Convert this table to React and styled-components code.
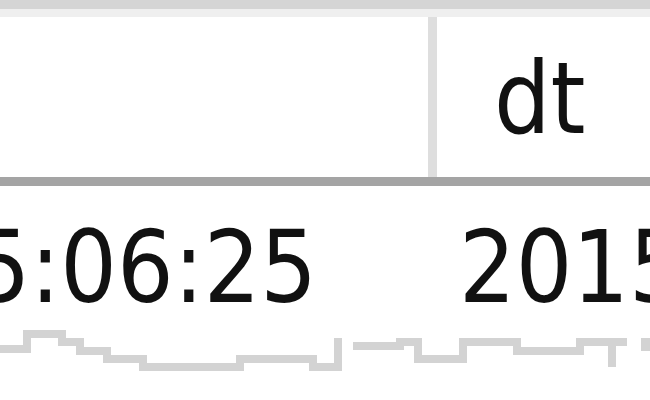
import React from "react";
import styled, { createGlobalStyle } from "styled-components";

const GlobalStyle = createGlobalStyle`
  html, body {
    margin: 0;
    padding: 0;
    background: #ffffff;
    overflow: hidden;
  }
`;

const Grid = styled.div`
  width: 650px;
  height: 400px;
  overflow: hidden;
  background: #ffffff;
  font-family: "DejaVu Sans Condensed", "DejaVu Sans", sans-serif;
  font-stretch: condensed;
  font-size: 99px;
  line-height: 99px;
  color: #111111;
`;

const TopBand = styled.div`
  height: 9px;
  background: #d5d5d5;
`;

const SubBand = styled.div`
  height: 8px;
  background: #efefef;
`;

const Row = styled.div`
  display: flex;
  height: ${(p) => p.$height}px;
  box-sizing: border-box;
  border-bottom: ${(p) => (p.$header ? "9px solid #a4a4a4" : "none")};
`;

const Cell = styled.div`
  display: flex;
  justify-content: ${(p) => (p.$align === "right" ? "flex-end" : "flex-start")};
  box-sizing: border-box;
  width: ${(p) => (p.$width ? `${p.$width}px` : "auto")};
  flex: ${(p) => (p.$width ? "none" : "1")};
  padding-top: 32px;
  padding-left: ${(p) => p.$padLeft || 0}px;
  padding-right: ${(p) => p.$padRight || 0}px;
  border-right: ${(p) => (p.$divider ? "9px solid #dedede" : "none")};
  white-space: nowrap;
  overflow: hidden;
`;

const Trace = styled.svg`
  display: block;
`;

const traceA =
  "0,349 27,349 27,334 62,334 62,342 80,342 80,351 107,351 107,359 143,359 143,367 240,367 240,359 313,359 313,367 338,367 338,342";
const traceB =
  "357,346 400,346 400,342 418,342 418,359 463,359 463,342 517,342 517,351 580,351 580,342 612,342 612,367 612,342 623,342";

export default function App() {
  return (
    <>
      <GlobalStyle />
      <Grid>
        <TopBand />
        <SubBand />
        <Row $header $height={169}>
          <Cell $width={437} $divider />
          <Cell $padLeft={57}>dt</Cell>
        </Row>
        <Row $height={134}>
          <Cell $width={437} $align="right" $padRight={120}>
            15:06:25
          </Cell>
          <Cell $padLeft={22}>2015-07-01</Cell>
        </Row>
        <Trace width="650" height="80" viewBox="0 320 650 80">
          <polyline
            points={traceA}
            fill="none"
            stroke="#d3d3d3"
            strokeWidth="8.7"
            strokeLinejoin="miter"
            strokeLinecap="square"
            shapeRendering="crispEdges"
          />
          <polyline
            points={traceB}
            fill="none"
            stroke="#d3d3d3"
            strokeWidth="8.7"
            strokeLinejoin="miter"
            strokeLinecap="square"
            shapeRendering="crispEdges"
          />
          <line
            x1="645"
            y1="338"
            x2="645"
            y2="351"
            stroke="#d3d3d3"
            strokeWidth="9"
            shapeRendering="crispEdges"
          />
        </Trace>
      </Grid>
    </>
  );
}
